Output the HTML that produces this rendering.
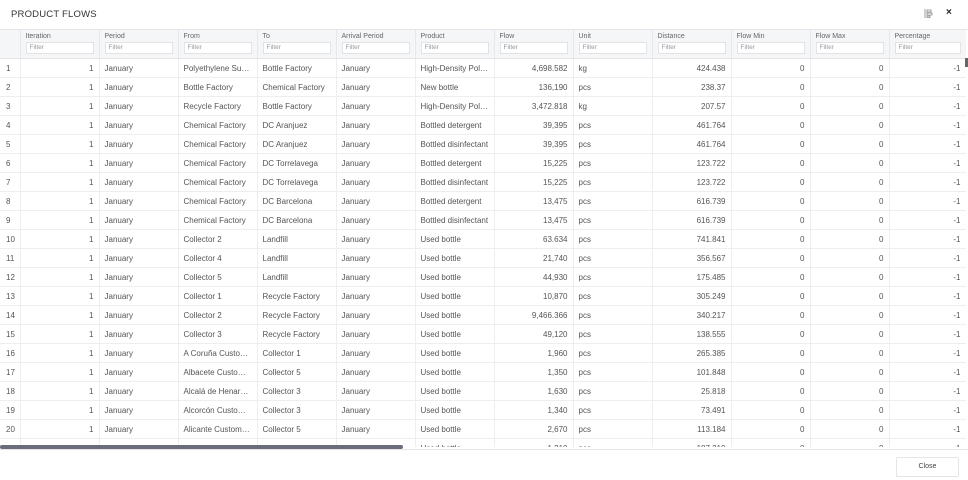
<!DOCTYPE html><html><head><style>
body{margin:0;width:968px;height:480px;background:#fff;font-family:"Liberation Sans",sans-serif;color:#555;overflow:hidden;position:relative}
.title{position:absolute;left:11px;top:9px;font-size:9.5px;color:#333;letter-spacing:.2px}
.top{position:absolute;left:0;top:29px;width:968px;height:1px;background:#e3e5e8}
.wrap{position:absolute;left:0;top:30px;width:966px;height:417px;overflow:hidden}
table{border-collapse:collapse;table-layout:fixed;width:966px;font-size:8px}
th{background:#f5f6f8;height:25px;font-weight:normal;text-align:left;vertical-align:top;padding:3px 5px 0;color:#666;border-right:1px solid #e6e8eb;border-bottom:1px solid #e3e5e8;font-size:7px}
th div{margin-top:2px;border:1px solid #e1e3e6;background:#fff;height:10px;line-height:10px;padding-left:3px;color:#999;font-size:6.5px}
td{height:18px;border-right:1px solid #eceef0;border-bottom:1px solid #eceef0;padding:0 5px;white-space:nowrap;overflow:hidden;text-overflow:ellipsis}
td.n{text-align:right}
td:first-child{padding:0 0 0 6px;text-overflow:clip;color:#555}
.hs{position:absolute;left:0;top:445px;width:403px;height:4px;background:#6b6d7a;border-radius:2px}
.hl{position:absolute;left:0;top:449px;width:968px;height:1px;background:#e3e5e8}
.vs{position:absolute;left:965px;top:58px;width:3px;height:9px;background:#666}
.close{position:absolute;left:896px;top:457px;width:61px;height:18px;border:1px solid #e3e5e8;border-radius:2px;font-size:7px;text-align:center;line-height:18px;color:#444}
</style></head><body>
<div class="title">PRODUCT FLOWS</div>
<svg style="position:absolute;left:924px;top:9px" width="9" height="9" viewBox="0 0 9 9"><path d="M1 0v9M3 1h4v2H3zM3 4h5v2H3zM3 7h3v1.5H3z" stroke="#888" fill="none" stroke-width=".8"/></svg>
<div style="position:absolute;left:946px;top:7px;font-size:10px;font-weight:bold;color:#222">×</div>
<div class="top"></div>
<div class="wrap"><table>
<colgroup><col style="width:20px"><col span="11" style="width:79px"><col style="width:77px"></colgroup>
<tr><th></th><th>Iteration<div>Filter</div></th><th>Period<div>Filter</div></th><th>From<div>Filter</div></th><th>To<div>Filter</div></th><th>Arrival Period<div>Filter</div></th><th>Product<div>Filter</div></th><th>Flow<div>Filter</div></th><th>Unit<div>Filter</div></th><th>Distance<div>Filter</div></th><th>Flow Min<div>Filter</div></th><th>Flow Max<div>Filter</div></th><th>Percentage<div>Filter</div></th></tr>
<tr><td>1</td><td class="n">1</td><td>January</td><td>Polyethylene Sup...</td><td>Bottle Factory</td><td>January</td><td>High-Density Poly...</td><td class="n">4,698.582</td><td>kg</td><td class="n">424.438</td><td class="n">0</td><td class="n">0</td><td class="n">-1</td></tr>
<tr><td>2</td><td class="n">1</td><td>January</td><td>Bottle Factory</td><td>Chemical Factory</td><td>January</td><td>New bottle</td><td class="n">136,190</td><td>pcs</td><td class="n">238.37</td><td class="n">0</td><td class="n">0</td><td class="n">-1</td></tr>
<tr><td>3</td><td class="n">1</td><td>January</td><td>Recycle Factory</td><td>Bottle Factory</td><td>January</td><td>High-Density Poly...</td><td class="n">3,472.818</td><td>kg</td><td class="n">207.57</td><td class="n">0</td><td class="n">0</td><td class="n">-1</td></tr>
<tr><td>4</td><td class="n">1</td><td>January</td><td>Chemical Factory</td><td>DC Aranjuez</td><td>January</td><td>Bottled detergent</td><td class="n">39,395</td><td>pcs</td><td class="n">461.764</td><td class="n">0</td><td class="n">0</td><td class="n">-1</td></tr>
<tr><td>5</td><td class="n">1</td><td>January</td><td>Chemical Factory</td><td>DC Aranjuez</td><td>January</td><td>Bottled disinfectant</td><td class="n">39,395</td><td>pcs</td><td class="n">461.764</td><td class="n">0</td><td class="n">0</td><td class="n">-1</td></tr>
<tr><td>6</td><td class="n">1</td><td>January</td><td>Chemical Factory</td><td>DC Torrelavega</td><td>January</td><td>Bottled detergent</td><td class="n">15,225</td><td>pcs</td><td class="n">123.722</td><td class="n">0</td><td class="n">0</td><td class="n">-1</td></tr>
<tr><td>7</td><td class="n">1</td><td>January</td><td>Chemical Factory</td><td>DC Torrelavega</td><td>January</td><td>Bottled disinfectant</td><td class="n">15,225</td><td>pcs</td><td class="n">123.722</td><td class="n">0</td><td class="n">0</td><td class="n">-1</td></tr>
<tr><td>8</td><td class="n">1</td><td>January</td><td>Chemical Factory</td><td>DC Barcelona</td><td>January</td><td>Bottled detergent</td><td class="n">13,475</td><td>pcs</td><td class="n">616.739</td><td class="n">0</td><td class="n">0</td><td class="n">-1</td></tr>
<tr><td>9</td><td class="n">1</td><td>January</td><td>Chemical Factory</td><td>DC Barcelona</td><td>January</td><td>Bottled disinfectant</td><td class="n">13,475</td><td>pcs</td><td class="n">616.739</td><td class="n">0</td><td class="n">0</td><td class="n">-1</td></tr>
<tr><td>10</td><td class="n">1</td><td>January</td><td>Collector 2</td><td>Landfill</td><td>January</td><td>Used bottle</td><td class="n">63.634</td><td>pcs</td><td class="n">741.841</td><td class="n">0</td><td class="n">0</td><td class="n">-1</td></tr>
<tr><td>11</td><td class="n">1</td><td>January</td><td>Collector 4</td><td>Landfill</td><td>January</td><td>Used bottle</td><td class="n">21,740</td><td>pcs</td><td class="n">356.567</td><td class="n">0</td><td class="n">0</td><td class="n">-1</td></tr>
<tr><td>12</td><td class="n">1</td><td>January</td><td>Collector 5</td><td>Landfill</td><td>January</td><td>Used bottle</td><td class="n">44,930</td><td>pcs</td><td class="n">175.485</td><td class="n">0</td><td class="n">0</td><td class="n">-1</td></tr>
<tr><td>13</td><td class="n">1</td><td>January</td><td>Collector 1</td><td>Recycle Factory</td><td>January</td><td>Used bottle</td><td class="n">10,870</td><td>pcs</td><td class="n">305.249</td><td class="n">0</td><td class="n">0</td><td class="n">-1</td></tr>
<tr><td>14</td><td class="n">1</td><td>January</td><td>Collector 2</td><td>Recycle Factory</td><td>January</td><td>Used bottle</td><td class="n">9,466.366</td><td>pcs</td><td class="n">340.217</td><td class="n">0</td><td class="n">0</td><td class="n">-1</td></tr>
<tr><td>15</td><td class="n">1</td><td>January</td><td>Collector 3</td><td>Recycle Factory</td><td>January</td><td>Used bottle</td><td class="n">49,120</td><td>pcs</td><td class="n">138.555</td><td class="n">0</td><td class="n">0</td><td class="n">-1</td></tr>
<tr><td>16</td><td class="n">1</td><td>January</td><td>A Coruña Custome...</td><td>Collector 1</td><td>January</td><td>Used bottle</td><td class="n">1,960</td><td>pcs</td><td class="n">265.385</td><td class="n">0</td><td class="n">0</td><td class="n">-1</td></tr>
<tr><td>17</td><td class="n">1</td><td>January</td><td>Albacete Custome...</td><td>Collector 5</td><td>January</td><td>Used bottle</td><td class="n">1,350</td><td>pcs</td><td class="n">101.848</td><td class="n">0</td><td class="n">0</td><td class="n">-1</td></tr>
<tr><td>18</td><td class="n">1</td><td>January</td><td>Alcalá de Henares ...</td><td>Collector 3</td><td>January</td><td>Used bottle</td><td class="n">1,630</td><td>pcs</td><td class="n">25.818</td><td class="n">0</td><td class="n">0</td><td class="n">-1</td></tr>
<tr><td>19</td><td class="n">1</td><td>January</td><td>Alcorcón Custome...</td><td>Collector 3</td><td>January</td><td>Used bottle</td><td class="n">1,340</td><td>pcs</td><td class="n">73.491</td><td class="n">0</td><td class="n">0</td><td class="n">-1</td></tr>
<tr><td>20</td><td class="n">1</td><td>January</td><td>Alicante Customer...</td><td>Collector 5</td><td>January</td><td>Used bottle</td><td class="n">2,670</td><td>pcs</td><td class="n">113.184</td><td class="n">0</td><td class="n">0</td><td class="n">-1</td></tr>
<tr><td>21</td><td class="n">1</td><td>January</td><td>Almería Custome...</td><td>Collector 5</td><td>January</td><td>Used bottle</td><td class="n">1,210</td><td>pcs</td><td class="n">187.210</td><td class="n">0</td><td class="n">0</td><td class="n">-1</td></tr>
</table></div>
<div class="hs"></div><div class="hl"></div><div class="vs"></div>
<div class="close">Close</div>
</body></html>
